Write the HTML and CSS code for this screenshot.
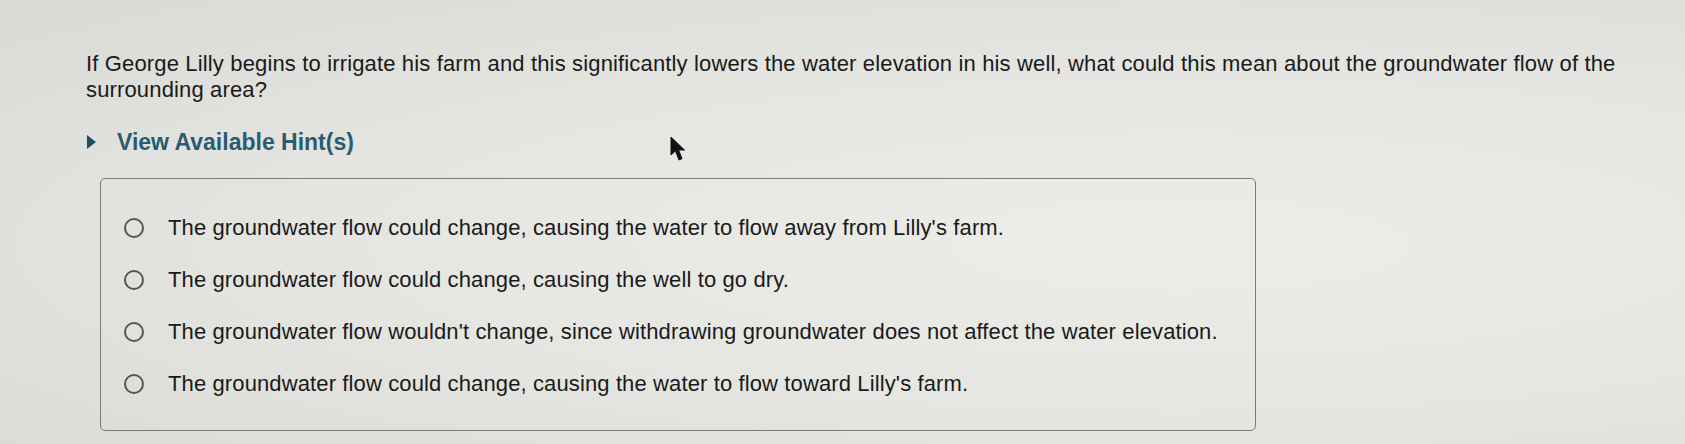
FILE: index.html
```html
<!DOCTYPE html>
<html lang="en">
<head>
<meta charset="utf-8">
<title>Question</title>
<link rel="stylesheet" href="styles.css">
</head>
<body>
<div class="page">
  <p class="question">If George Lilly begins to irrigate his farm and this significantly lowers the water elevation in his well, what could this mean about the groundwater flow of the surrounding area?</p>
  <div class="hint">
    <span class="hint-arrow"></span>
    <span class="hint-label">View Available Hint(s)</span>
  </div>
  <div class="choices">
    <label class="choice"><span class="radio"></span><span class="choice-text">The groundwater flow could change, causing the water to flow away from Lilly's farm.</span></label>
    <label class="choice"><span class="radio"></span><span class="choice-text">The groundwater flow could change, causing the well to go dry.</span></label>
    <label class="choice"><span class="radio"></span><span class="choice-text">The groundwater flow wouldn't change, since withdrawing groundwater does not affect the water elevation.</span></label>
    <label class="choice"><span class="radio"></span><span class="choice-text">The groundwater flow could change, causing the water to flow toward Lilly's farm.</span></label>
  </div>
  <svg class="cursor" width="16" height="26" viewBox="0 0 16 26"><path d="M1 1 L1 19 L5.5 15 L9 24 L12 22.6 L8.6 14 L14.5 14 Z" fill="#111" stroke="#111" stroke-width="1" stroke-linejoin="round"/></svg>
</div>
</body>
</html>
```

FILE: styles.css
```css
html, body {
  margin: 0;
  padding: 0;
}
body {
  width: 1685px;
  height: 444px;
  overflow: hidden;
  background: radial-gradient(ellipse at 70% 55%, #ecece9 0%, #e6e6e3 45%, #d9d9d6 100%);
  font-family: "Liberation Sans", Arial, Helvetica, sans-serif;
  color: #1a1a1a;
}
.page {
  position: relative;
  padding: 51px 0 0 86px;
}
.question {
  margin: 0;
  width: 1585px;
  font-size: 22px;
  line-height: 26px;
  letter-spacing: 0.15px;
}
.hint {
  display: flex;
  align-items: center;
  margin-top: 26px;
  height: 26px;
  color: #2a5b70;
}
.hint-arrow {
  width: 0;
  height: 0;
  border-top: 7px solid transparent;
  border-bottom: 7px solid transparent;
  border-left: 9px solid #1f4f66;
  margin-left: 1px;
}
.hint-label {
  margin-left: 21px;
  font-weight: bold;
  font-size: 23px;
}
.choices {
  margin-top: 23px;
  margin-left: 14px;
  width: 1156px;
  box-sizing: border-box;
  border: 1.5px solid #7b7b7a;
  border-radius: 5px;
  padding: 23px 0 20px 23px;
  display: flex;
  flex-direction: column;
}
.choice {
  display: flex;
  align-items: center;
  height: 52px;
  font-size: 22px;
  letter-spacing: 0.12px;
}
.radio {
  width: 16px;
  height: 16px;
  border: 2px solid #575757;
  border-radius: 50%;
  flex: none;
}
.choice-text {
  margin-left: 24px;
}
.cursor {
  position: absolute;
  left: 670px;
  top: 136px;
}
```
